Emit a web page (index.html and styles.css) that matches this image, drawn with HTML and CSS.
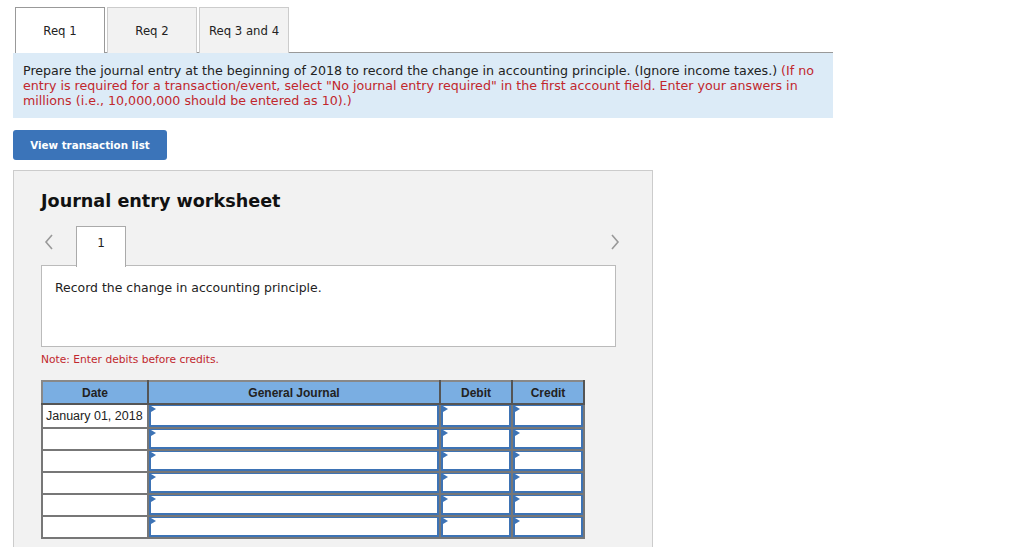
FILE: index.html
```html
<!DOCTYPE html>
<html>
<head>
<meta charset="utf-8">
<link rel="stylesheet" href="styles.css">
</head>
<body>
<div class="page">
  <div class="tabs">
    <div class="tab active">Req 1</div>
    <div class="tab">Req 2</div>
    <div class="tab">Req 3 and 4</div>
  </div>
  <div class="instructions">
    Prepare the journal entry at the beginning of 2018 to record the change in accounting principle. (Ignore income taxes.) <span class="red">(If no entry is required for a transaction/event, select "No journal entry required" in the first account field. Enter your answers in millions (i.e., 10,000,000 should be entered as 10).)</span>
  </div>
  <button class="btn">View transaction list</button>
  <div class="panel">
    <h2 class="title">Journal entry worksheet</h2>
    <div class="navrow">
      <span class="chev">
        <svg width="10" height="16" viewBox="0 0 10 16"><path d="M8 1 L2 8 L8 15" fill="none" stroke="#999" stroke-width="1.6"/></svg>
      </span>
      <div class="numtab">1</div>
      <span class="spacer"></span>
      <span class="chev">
        <svg width="10" height="16" viewBox="0 0 10 16"><path d="M2 1 L8 8 L2 15" fill="none" stroke="#999" stroke-width="1.6"/></svg>
      </span>
    </div>
    <div class="desc">Record the change in accounting principle.</div>
    <div class="note">Note: Enter debits before credits.</div>
    <table class="journal">
      <colgroup><col class="c-date"><col class="c-gj"><col class="c-dr"><col class="c-cr"></colgroup>
      <thead>
        <tr><th>Date</th><th>General Journal</th><th>Debit</th><th>Credit</th></tr>
      </thead>
      <tbody>
        <tr class="first"><td class="date">January 01, 2018</td><td><div class="inp"></div></td><td><div class="inp"></div></td><td><div class="inp"></div></td></tr>
        <tr><td class="date"></td><td><div class="inp"></div></td><td><div class="inp"></div></td><td><div class="inp"></div></td></tr>
        <tr><td class="date"></td><td><div class="inp"></div></td><td><div class="inp"></div></td><td><div class="inp"></div></td></tr>
        <tr><td class="date"></td><td><div class="inp"></div></td><td><div class="inp"></div></td><td><div class="inp"></div></td></tr>
        <tr><td class="date"></td><td><div class="inp"></div></td><td><div class="inp"></div></td><td><div class="inp"></div></td></tr>
        <tr><td class="date"></td><td><div class="inp"></div></td><td><div class="inp"></div></td><td><div class="inp"></div></td></tr>
      </tbody>
    </table>
  </div>
</div>
</body>
</html>
```

FILE: styles.css
```css
* { box-sizing: border-box; }
html, body { margin: 0; padding: 0; background: #fff; }
body { font-family: "DejaVu Sans", Verdana, sans-serif; color: #222; overflow: hidden; height: 547px; }
.page { padding: 7px 0 0 13px; }

.tabs {
  display: flex;
  gap: 2px;
  margin-left: 2px;
  width: 818px;
  border-bottom: 1px solid #999;
  height: 46px;
}
.tab {
  width: 90px;
  height: 46px;
  background: #f2f2f2;
  border: 1px solid #ccc;
  border-bottom: none;
  font-size: 11.7px;
  display: flex;
  align-items: center;
  justify-content: center;
  color: #222;
}
.tab.active {
  background: #fff;
  border: 1px solid #999;
  border-bottom: none;
  margin-bottom: -1px;
}

.instructions {
  width: 820px;
  height: 65px;
  background: #dcebf7;
  padding: 10px 10px 0 10px;
  font-size: 12.65px;
  line-height: 15px;
  color: #222;
}
.red { color: #c1272d; }

.btn {
  display: block;
  margin-top: 12px;
  width: 154px;
  height: 30px;
  background: #3b74b9;
  color: #fff;
  border: none;
  border-radius: 3px;
  font-family: "DejaVu Sans", Verdana, sans-serif;
  font-weight: bold;
  font-size: 10.3px;
  padding: 0;
}

.panel {
  margin-top: 10px;
  width: 640px;
  height: 400px;
  background: #f2f2f2;
  border: 1px solid #ccc;
  padding: 19px 0 0 27px;
}
.title {
  margin: 0;
  font-size: 17.6px;
  line-height: 22px;
  font-weight: bold;
  color: #111;
}
.navrow {
  display: flex;
  align-items: center;
  margin-top: 14px;
  width: 582px;
  height: 40px;
  position: relative;
  z-index: 1;
}
.chev { display: flex; width: 16px; justify-content: center; margin-top: -8px; }
.navrow .chev:first-child { margin-right: 19px; }
.spacer { flex: 1; }
.numtab {
  width: 50px;
  height: 41px;
  background: #fff;
  border: 1px solid #aaa;
  border-bottom: none;
  font-size: 12px;
  display: flex;
  align-items: center;
  justify-content: center;
  padding-bottom: 8px;
  margin-bottom: -1px;
  align-self: flex-start;
}
.desc {
  width: 575px;
  height: 82px;
  margin-top: -1px;
  background: #fff;
  border: 1px solid #bbb;
  padding: 14px 13px;
  font-size: 12.45px;
  line-height: 15px;
}
.note {
  margin-top: 7px;
  font-size: 10.7px;
  line-height: 12px;
  color: #c1272d;
}
.journal {
  margin-top: 14px;
  border-collapse: collapse;
  table-layout: fixed;
  font-family: "Liberation Sans", Arial, sans-serif;
  width: 542px;
  background: #fff;
}
.c-date { width: 106px; }
.c-gj { width: 292px; }
.c-dr { width: 72px; }
.c-cr { width: 72px; }
.journal th {
  background: #7aaee2;
  border: 2px solid #555;
  border-top-color: #888;
  font-size: 12px;
  font-weight: bold;
  color: #222;
  height: 23px;
  padding: 0;
}
.journal th:first-child { border-left-color: #888; }
.journal td {
  border: 2px solid #777;
  padding: 0;
  height: 22px;
}
.journal tr.first td { height: 24px; }
.journal td.date {
  font-size: 12.5px;
  padding-left: 3px;
  color: #222;
  white-space: nowrap;
  background: #fff;
}
.inp {
  height: 100%;
  min-height: 20px;
  border: 2px solid #3d73b5;
  border-top-width: 1px;
  position: relative;
  background: #fff;
}
.inp::before {
  content: "";
  position: absolute;
  left: 0;
  top: 0;
  border-left: 5px solid #3d73b5;
  border-top: 3px solid transparent;
  border-bottom: 3px solid transparent;
}
```
